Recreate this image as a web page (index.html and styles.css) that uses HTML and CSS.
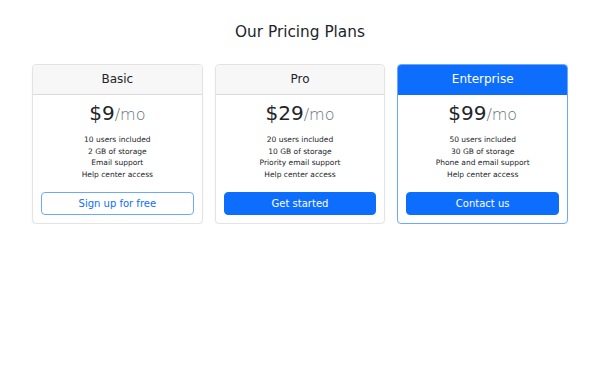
FILE: index.html
```html
<!DOCTYPE html>
<html lang="en">
<head>
    <meta charset="UTF-8">
    <meta name="viewport" content="width=device-width, initial-scale=1.0">
    <title>Our Pricing Plans</title>
    <link rel="stylesheet" href="styles.css">
</head>
<body>
    <div class="container">
        <h1 class="title">Our Pricing Plans</h1>

        <div class="plans">
            <div class="card">
                <div class="card-header">Basic</div>
                <div class="card-body">
                    <div class="price">$9<small>/mo</small></div>
                    <ul class="features">
                        <li>10 users included</li>
                        <li>2 GB of storage</li>
                        <li>Email support</li>
                        <li>Help center access</li>
                    </ul>
                    <button class="btn btn-outline">Sign up for free</button>
                </div>
            </div>

            <div class="card">
                <div class="card-header">Pro</div>
                <div class="card-body">
                    <div class="price">$29<small>/mo</small></div>
                    <ul class="features">
                        <li>20 users included</li>
                        <li>10 GB of storage</li>
                        <li>Priority email support</li>
                        <li>Help center access</li>
                    </ul>
                    <button class="btn btn-primary">Get started</button>
                </div>
            </div>

            <div class="card card-featured">
                <div class="card-header">Enterprise</div>
                <div class="card-body">
                    <div class="price">$99<small>/mo</small></div>
                    <ul class="features">
                        <li>50 users included</li>
                        <li>30 GB of storage</li>
                        <li>Phone and email support</li>
                        <li>Help center access</li>
                    </ul>
                    <button class="btn btn-primary">Contact us</button>
                </div>
            </div>
        </div>
    </div>
</body>
</html>
```

FILE: styles.css
```css
body {
    font-family: "DejaVu Sans", sans-serif;
    color: #212529;
    background-color: #fff;
    margin: 0;
    padding: 0;
}

.container {
    padding: 22px 32px 0;
}

.title {
    font-size: 15.3px;
    font-weight: 400;
    text-align: center;
    margin: 0 0 22px;
    line-height: 20px;
}

.plans {
    display: grid;
    grid-template-columns: repeat(3, 1fr);
    gap: 12px;
}

.card {
    border: 1px solid rgba(0, 0, 0, 0.11);
    border-radius: 4px;
    box-shadow: 0 1px 2px rgba(0, 0, 0, 0.05);
    overflow: hidden;
}

.card-header {
    background-color: #f7f7f7;
    border-bottom: 1px solid rgba(0, 0, 0, 0.11);
    text-align: center;
    font-size: 12px;
    line-height: 29px;
}

.card-featured {
    border-color: #6ea8fe;
}

.card-featured .card-header {
    background-color: #0d6efd;
    border-bottom-color: #0d6efd;
    color: #fff;
}

.card-body {
    padding: 4px 8px 8px;
    text-align: center;
}

.price {
    font-size: 20px;
    line-height: 28px;
}

.price small {
    font-size: 16px;
    font-weight: 300;
    color: #6c757d;
}

.features {
    list-style: none;
    margin: 5px 0 12px;
    padding: 0;
    font-size: 7.5px;
    line-height: 11.5px;
}

.btn {
    display: block;
    width: 100%;
    height: 23px;
    font-family: inherit;
    font-size: 10px;
    border-radius: 4px;
    cursor: pointer;
}

.btn-outline {
    background-color: #fff;
    color: #0d6efd;
    border: 1px solid #6ea8fe;
}

.btn-primary {
    background-color: #0d6efd;
    color: #fff;
    border: 1px solid #0d6efd;
}
```
